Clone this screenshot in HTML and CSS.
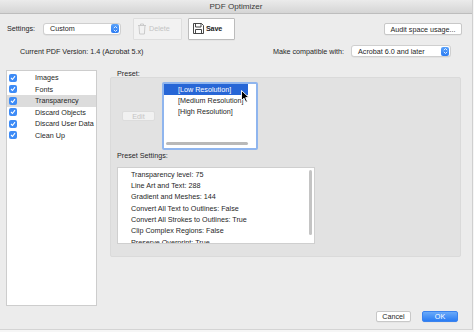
FILE: index.html
```html
<!DOCTYPE html>
<html>
<head>
<meta charset="utf-8">
<link rel="stylesheet" href="styles.css">
</head>
<body>
<div class="window">
  <div class="titlebar">PDF Optimizer</div>

  <div class="row1">
    <span class="lbl settings-lbl">Settings:</span>
    <div class="select sel-settings"><span>Custom</span><span class="stepper"><svg width="6" height="9" viewBox="0 0 6 9"><path d="M1 3.5 L3 1.5 L5 3.5 M1 5.5 L3 7.5 L5 5.5" fill="none" stroke="#fff" stroke-width="1"/></svg></span></div>
    <div class="btn big disabled">
      <svg width="10" height="12" viewBox="0 0 10 12"><path d="M1 2.5 H9 M3.5 2.5 V1 H6.5 V2.5 M2 2.5 L2.6 11 H7.4 L8 2.5" fill="none" stroke="#c6c6c6" stroke-width="0.9"/></svg>
      <span>Delete</span>
    </div>
    <div class="btn big save">
      <svg width="11" height="11" viewBox="0 0 11 11"><path d="M0.5 0.5 H8.5 L10.5 2.5 V10.5 H0.5 Z M2.5 0.5 V4 H8 V0.5 M2.5 10.5 V6.5 H8.5 V10.5" fill="none" stroke="#333" stroke-width="0.9"/></svg>
      <span>Save</span>
    </div>
    <div class="btn audit">Audit space usage...</div>
  </div>

  <div class="row2">
    <span class="lbl">Current PDF Version: 1.4 (Acrobat 5.x)</span>
    <span class="lbl compat-lbl">Make compatible with:</span>
    <div class="select sel-compat"><span>Acrobat 6.0 and later</span><span class="stepper"><svg width="6" height="9" viewBox="0 0 6 9"><path d="M1 3.5 L3 1.5 L5 3.5 M1 5.5 L3 7.5 L5 5.5" fill="none" stroke="#fff" stroke-width="1"/></svg></span></div>
  </div>

  <div class="main">
    <ul class="panels">
      <li><span class="cb"><svg width="6" height="6" viewBox="0 0 6 6"><path d="M1 3 L2.5 4.5 L5 1.2" fill="none" stroke="#fff" stroke-width="1.1"/></svg></span><span>Images</span></li>
      <li><span class="cb"><svg width="6" height="6" viewBox="0 0 6 6"><path d="M1 3 L2.5 4.5 L5 1.2" fill="none" stroke="#fff" stroke-width="1.1"/></svg></span><span>Fonts</span></li>
      <li class="hl"><span class="cb"><svg width="6" height="6" viewBox="0 0 6 6"><path d="M1 3 L2.5 4.5 L5 1.2" fill="none" stroke="#fff" stroke-width="1.1"/></svg></span><span>Transparency</span></li>
      <li><span class="cb"><svg width="6" height="6" viewBox="0 0 6 6"><path d="M1 3 L2.5 4.5 L5 1.2" fill="none" stroke="#fff" stroke-width="1.1"/></svg></span><span>Discard Objects</span></li>
      <li><span class="cb"><svg width="6" height="6" viewBox="0 0 6 6"><path d="M1 3 L2.5 4.5 L5 1.2" fill="none" stroke="#fff" stroke-width="1.1"/></svg></span><span>Discard User Data</span></li>
      <li><span class="cb"><svg width="6" height="6" viewBox="0 0 6 6"><path d="M1 3 L2.5 4.5 L5 1.2" fill="none" stroke="#fff" stroke-width="1.1"/></svg></span><span>Clean Up</span></li>
    </ul>

    <div class="right">
      <div class="sect-lbl">Preset:</div>
      <div class="graybox">
        <div class="preset-row">
          <div class="btn edit disabled">Edit</div>
          <div class="preset-list">
            <div class="pitem sel">[Low Resolution]</div>
            <div class="pitem">[Medium Resolution]</div>
            <div class="pitem">[High Resolution]</div>
            <div class="hscroll"></div>
            <svg class="cursor" width="9" height="13" viewBox="0 0 9 13"><path d="M0.5 0.5 V10.5 L3 8.2 L4.8 12.2 L6.4 11.5 L4.7 7.6 H8 Z" fill="#000" stroke="#fff" stroke-width="0.9"/></svg>
          </div>
        </div>
        <div class="sect-lbl2">Preset Settings:</div>
        <div class="settings-list">
          <div class="sitem">Transparency level: 75</div>
          <div class="sitem">Line Art and Text: 288</div>
          <div class="sitem">Gradient and Meshes: 144</div>
          <div class="sitem">Convert All Text to Outlines: False</div>
          <div class="sitem">Convert All Strokes to Outlines: True</div>
          <div class="sitem">Clip Complex Regions: False</div>
          <div class="sitem">Preserve Overprint: True</div>
          <div class="vscroll"></div>
        </div>
      </div>
    </div>
  </div>

  <div class="footer">
    <div class="btn cancel">Cancel</div>
    <div class="btn ok">OK</div>
  </div>
</div>
</body>
</html>
```

FILE: styles.css
```css
* { box-sizing: border-box; }
html, body {
  margin: 0;
  padding: 0;
  width: 474px;
  height: 332px;
  background: #f6f6f6;
  overflow: hidden;
}
body {
  font-family: "Liberation Sans", Arial, sans-serif;
  font-size: 7.2px;
  color: #262626;
}
.window {
  width: 473px;
  height: 330px;
  background: #ececec;
  border-right: 1px solid #cfcfcf;
  border-bottom: 1px solid #d4d4d4;
  display: flex;
  flex-direction: column;
}
.titlebar {
  height: 14px;
  flex: none;
  background: linear-gradient(#ebebeb, #d5d5d5);
  border-bottom: 1px solid #bdbdbd;
  text-align: center;
  font-size: 8.1px;
  line-height: 13px;
  color: #3a3a3a;
}
.row1 {
  margin-top: 3px;
  height: 23px;
  flex: none;
  display: flex;
  align-items: center;
  padding: 0 10px 0 7px;
}
.settings-lbl { width: 36px; }
.select {
  height: 12px;
  background: #fff;
  border: 1px solid #cfcfcf;
  border-radius: 3px;
  display: flex;
  align-items: center;
  justify-content: space-between;
  padding: 0 1px 0 6px;
  box-shadow: 0 0.5px 0.5px rgba(0,0,0,0.08);
}
.sel-settings { width: 78px; }
.stepper {
  width: 8px;
  height: 9px;
  background: linear-gradient(#5aa2fa, #2c7cf3);
  border-radius: 2px;
  display: flex;
  align-items: center;
  justify-content: center;
}
.stepper svg { display: block; width: 5px; height: 8px; }
.btn {
  background: #fff;
  border: 1px solid #c8c8c8;
  border-radius: 2px;
  display: flex;
  align-items: center;
  justify-content: center;
  box-shadow: 0 0.5px 0.5px rgba(0,0,0,0.06);
}
.btn.big {
  height: 22px;
  width: 49px;
  justify-content: flex-start;
  padding-left: 3px;
  gap: 2px;
  border-radius: 1px;
}
.btn.big.disabled {
  margin-left: 12px;
  background: #f2f2f2;
  border-color: #dedede;
  color: #c4c4c4;
  box-shadow: none;
}
.btn.big.save {
  margin-left: 6px;
  width: 47px;
  padding-left: 4px;
  border-color: #bcbcbc;
  color: #1e1e1e;
  font-weight: bold;
  letter-spacing: -0.2px;
}
.audit {
  margin-left: auto;
  width: 78px;
  height: 12px;
  margin-top: 1px;
}
.row2 {
  margin-top: 5px;
  height: 12px;
  flex: none;
  display: flex;
  align-items: center;
  padding: 0 21px 0 20px;
}
.compat-lbl { margin-left: auto; margin-right: 7px; }
.sel-compat { width: 100px; }
.main {
  margin-top: 13px;
  height: 236px;
  flex: none;
  display: flex;
  align-items: flex-start;
  padding-left: 6px;
}
.panels {
  list-style: none;
  margin: 0;
  padding: 1px 0 0 0;
  width: 91px;
  height: 236px;
  background: #fff;
  border: 1px solid #cdcdcd;
}
.panels li {
  height: 11.5px;
  display: flex;
  align-items: center;
  padding-left: 2px;
}
.panels li.hl { background: #dcdcdc; }
.cb {
  width: 8px;
  height: 8px;
  border-radius: 2px;
  background: #3d8bf6;
  display: flex;
  align-items: center;
  justify-content: center;
  margin-right: 18px;
}
.cb svg { display: block; }
.right {
  margin-left: 13px;
  width: 351px;
}
.sect-lbl {
  height: 7px;
  line-height: 7px;
  padding-left: 7px;
}
.graybox {
  height: 180px;
  background: #e2e2e2;
  border: 1px solid #dadada;
  border-radius: 2px;
}
.preset-row {
  display: flex;
  align-items: center;
  padding: 4px 0 0 11px;
}
.edit {
  width: 33px;
  height: 10px;
  background: #f1f1f1;
  border-color: #dcdcdc;
  color: #c4c4c4;
  box-shadow: none;
}
.preset-list {
  position: relative;
  margin-left: 7px;
  width: 96px;
  height: 68px;
  background: #fff;
  border: 2px solid #8fb5ee;
  border-radius: 2px;
  padding: 0 8px 0 0;
}
.pitem {
  height: 11px;
  line-height: 11px;
  padding-left: 14px;
  white-space: nowrap;
}
.pitem.sel {
  background: #2766d6;
  color: #fff;
  height: 11px;
}
.hscroll {
  position: absolute;
  left: 2px;
  right: 8px;
  bottom: 3px;
  height: 3px;
  border-radius: 2px;
  background: #b9b9b9;
}
.cursor {
  position: absolute;
  left: 77px;
  top: 6px;
}
.sect-lbl2 {
  margin-top: 2px;
  height: 8px;
  line-height: 8px;
  padding-left: 6px;
}
.settings-list {
  position: relative;
  margin: 7px 0 0 6px;
  width: 198px;
  height: 77px;
  background: #fff;
  border: 1px solid #cfcfcf;
  overflow: hidden;
  padding-top: 0.5px;
}
.sitem {
  height: 11.4px;
  line-height: 11.4px;
  padding-left: 13px;
  white-space: nowrap;
}
.vscroll {
  position: absolute;
  right: 2px;
  top: 2px;
  width: 3px;
  height: 65px;
  border-radius: 2px;
  background: #c4c4c4;
}
.footer {
  margin-top: 5px;
  height: 11px;
  flex: none;
  display: flex;
  justify-content: flex-end;
  gap: 11px;
  padding-right: 14px;
}
.cancel { width: 35px; height: 11px; }
.ok {
  width: 36px;
  height: 11px;
  background: linear-gradient(#6aaaf9, #2a7cf3);
  border-color: #3b83ee;
  color: #fff;
}
```
